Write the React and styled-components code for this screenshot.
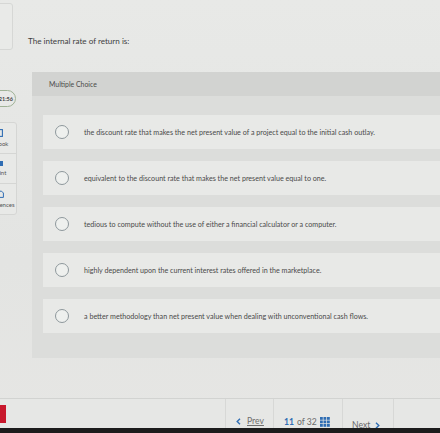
import React from "react";
import styled, { createGlobalStyle } from "styled-components";

const Global = createGlobalStyle`
  html, body { margin: 0; padding: 0; background: #e4e5e3; }
  body { font-family: Lato, "Liberation Sans", Arial, sans-serif; }
  * { box-sizing: border-box; }
`;

const Page = styled.div`
  width: 440px;
  height: 433px;
  overflow: hidden;
  display: flex;
  flex-direction: column;
  background: linear-gradient(180deg, #e8e9e7 0%, #e3e4e2 60%, #e6e6e4 100%);
`;

const Body = styled.div`
  height: 398px;
  display: grid;
  grid-template-columns: 17px 1fr;
  column-gap: 11px;
`;

const Sidebar = styled.div`
  display: flex;
  flex-direction: column;
  padding-top: 3px;
  overflow: hidden;
`;

const Clip = styled.div`
  display: flex;
  justify-content: flex-end;
  overflow: hidden;
  width: ${(p) => p.$w}px;
  margin-top: ${(p) => p.$mt || 0}px;
`;

const TopCard = styled.div`
  flex: none;
  width: 40px;
  height: 47px;
  background: #e9eae8;
  border: 1px solid #d6d7d5;
  border-radius: 3px;
`;

const Timer = styled.div`
  flex: none;
  width: 40px;
  height: 17px;
  border: 1.2px solid #9fb296;
  border-radius: 9px;
  background: #e8e9e7;
  display: flex;
  align-items: center;
  justify-content: flex-end;
  padding-right: 2px;
  font-size: 5.5px;
  font-weight: 700;
  color: #444;
`;

const ToolCard = styled.div`
  flex: none;
  width: 34px;
  height: 93px;
  background: #e8e9e7;
  border: 1px solid #d5d6d4;
  border-radius: 3px;
  display: flex;
  flex-direction: column;
`;

const Tool = styled.div`
  flex: 1;
  display: flex;
  flex-direction: column;
  align-items: center;
  justify-content: center;
  gap: 3px;
  border-top: ${(p) => (p.$first ? "none" : "1px solid #d5d6d4")};
  font-size: 6px;
  color: #555;
`;

const ToolLabel = styled.span`
  line-height: 7px;
  white-space: nowrap;
`;

const Main = styled.div`
  display: flex;
  flex-direction: column;
  padding-top: 36px;
`;

const Question = styled.div`
  font-size: 8.1px;
  line-height: 10px;
  color: #3e3e3e;
`;

const Panel = styled.div`
  margin-top: 26px;
  margin-left: 4px;
  margin-right: -4px;
  background: #dcdddb;
  display: flex;
  flex-direction: column;
`;

const PanelHeader = styled.div`
  height: 24px;
  background: #d2d3d1;
  display: flex;
  align-items: center;
  padding-left: 17px;
  font-size: 6.9px;
  color: #4a4a4a;
`;

const Options = styled.div`
  display: flex;
  flex-direction: column;
  gap: 12px;
  padding: 19px 0 25px 11px;
`;

const Option = styled.div`
  height: 34px;
  background: #e8e9e7;
  display: flex;
  align-items: center;
  padding-left: 12px;
  gap: 15px;
`;

const Radio = styled.span`
  flex: none;
  width: 14px;
  height: 14px;
  border-radius: 50%;
  border: 1.3px solid #8e989c;
  background: #eef0ee;
`;

const OptionText = styled.span`
  font-size: 7.15px;
  color: #4a4a4a;
  white-space: nowrap;
`;

const Footer = styled.div`
  height: 30px;
  border-top: 1px solid #d2d3d1;
  display: flex;
  align-items: stretch;
  background: #e6e7e5;
`;

const Logo = styled.div`
  width: 6px;
  height: 18px;
  margin-top: 6px;
  background: #c8182c;
`;

const Nav = styled.div`
  margin-left: 219px;
  display: flex;
  align-items: stretch;
  border-right: 1px solid #d7d8d6;
`;

const NavCell = styled.div`
  width: ${(p) => p.$w}px;
  border-left: 1px solid #d7d8d6;
  display: flex;
  align-items: flex-end;
  justify-content: flex-start;
  padding: 0 0 0 ${(p) => p.$pl || 0}px;
  font-size: 8.6px;
  line-height: 10px;
  color: #6a6a6a;
`;

const NavItem = styled.span`
  display: flex;
  align-items: center;
  gap: ${(p) => p.$gap || 4}px;
  margin-bottom: ${(p) => p.$mb || 0}px;
`;

const Link = styled.span`
  text-decoration: underline;
  color: #6f6f6f;
`;

const PageNum = styled.span`
  color: #2f6db3;
  font-weight: 700;
`;

const BottomBar = styled.div`
  height: 5px;
  background: #1c1c1c;
`;

const options = [
  "the discount rate that makes the net present value of a project equal to the initial cash outlay.",
  "equivalent to the discount rate that makes the net present value equal to one.",
  "tedious to compute without the use of either a financial calculator or a computer.",
  "highly dependent upon the current interest rates offered in the marketplace.",
  "a better methodology than net present value when dealing with unconventional cash flows.",
];

const BookIcon = () => (
  <svg width="6" height="8" viewBox="0 0 6 8">
    <rect x="0.6" y="0.6" width="4.8" height="6.8" fill="none" stroke="#2f6db3" strokeWidth="1.1" />
  </svg>
);

const PrintIcon = () => (
  <svg width="5" height="5" viewBox="0 0 5 5">
    <rect x="0" y="0" width="5" height="5" fill="#2f6db3" />
  </svg>
);

const DocIcon = () => (
  <svg width="7" height="8" viewBox="0 0 7 8">
    <path d="M0.6 1.2 h4 l1.8 1.8 v4.4 h-5.8 z" fill="none" stroke="#2f6db3" strokeWidth="1" />
  </svg>
);

const GridIcon = () => (
  <svg width="10" height="10" viewBox="0 0 10 10">
    {[0, 1, 2].map((r) =>
      [0, 1, 2].map((c) => (
        <rect key={`${r}-${c}`} x={c * 3.5} y={r * 3.5} width="2.8" height="2.8" fill="#2f6db3" />
      ))
    )}
  </svg>
);

const Chevron = ({ dir }) => (
  <svg width="5" height="7" viewBox="0 0 5 7">
    <path
      d={dir === "left" ? "M4 0.8 L1.2 3.5 L4 6.2" : "M1 0.8 L3.8 3.5 L1 6.2"}
      fill="none"
      stroke="#2f6db3"
      strokeWidth="1.4"
    />
  </svg>
);

export default function App() {
  return (
    <>
      <Global />
      <Page>
        <Body>
          <Sidebar>
            <Clip $w={13}>
              <TopCard />
            </Clip>
            <Clip $w={16} $mt={40}>
              <Timer>21:56</Timer>
            </Clip>
            <Clip $w={17} $mt={15}>
              <ToolCard>
                <Tool $first>
                  <BookIcon />
                  <ToolLabel>eBook</ToolLabel>
                </Tool>
                <Tool>
                  <PrintIcon />
                  <ToolLabel>Print</ToolLabel>
                </Tool>
                <Tool>
                  <DocIcon />
                  <ToolLabel>References</ToolLabel>
                </Tool>
              </ToolCard>
            </Clip>
          </Sidebar>
          <Main>
            <Question>The internal rate of return is:</Question>
            <Panel>
              <PanelHeader>Multiple Choice</PanelHeader>
              <Options>
                {options.map((t) => (
                  <Option key={t}>
                    <Radio />
                    <OptionText>{t}</OptionText>
                  </Option>
                ))}
              </Options>
            </Panel>
          </Main>
        </Body>
        <Footer>
          <Logo />
          <Nav>
            <NavCell $w={48} $pl={10}>
              <NavItem $gap={6} $mb={2}>
                <Chevron dir="left" />
                <Link>Prev</Link>
              </NavItem>
            </NavCell>
            <NavCell $w={69} $pl={10}>
              <NavItem $gap={3} $mb={1}>
                <PageNum>11</PageNum>
                <span>of 32</span>
                <GridIcon />
              </NavItem>
            </NavCell>
            <NavCell $w={51} $pl={9}>
              <NavItem $gap={5} $mb={-2}>
                <span>Next</span>
                <Chevron dir="right" />
              </NavItem>
            </NavCell>
          </Nav>
        </Footer>
        <BottomBar />
      </Page>
    </>
  );
}
